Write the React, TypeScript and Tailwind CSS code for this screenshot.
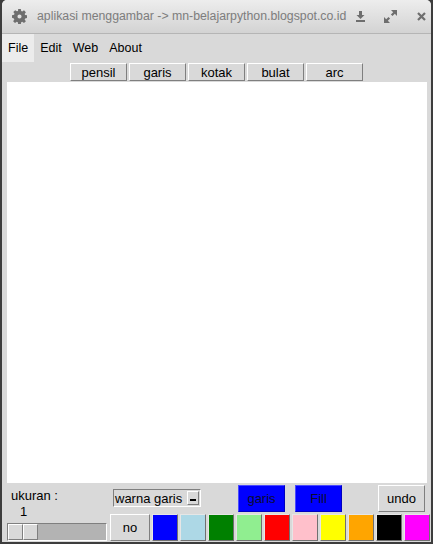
import React from "react";

const SWATCHES = [
  "#0000ff",
  "#add8e6",
  "#008000",
  "#90ee90",
  "#ff0000",
  "#ffc0cb",
  "#ffff00",
  "#ffa500",
  "#000000",
  "#ff00ff",
];

const TOOLS = ["pensil", "garis", "kotak", "bulat", "arc"];

const raised =
  "border border-t-white border-l-white border-b-[#7f7f7f] border-r-[#7f7f7f]";

// chunky 8-tooth gear like the window manager's menu icon
const Gear = () => (
  <svg className="shrink-0" width="15" height="15" viewBox="0 0 16 16" fill="#6e6e6e">
    <path
      fillRule="evenodd"
      d="M6.6 0h2.8l.4 2.2 1.1.5 1.9-1.3 2 2-1.3 1.9.5 1.1 2.2.4v2.8l-2.2.4-.5 1.1 1.3 1.9-2 2-1.9-1.3-1.1.5-.4 2.2H6.6l-.4-2.2-1.1-.5-1.9 1.3-2-2 1.3-1.9-.5-1.1L0 9.4V6.6l2.2-.4.5-1.1-1.3-1.9 2-2 1.9 1.3 1.1-.5zM8 5.8a2.2 2.2 0 1 0 0 4.4 2.2 2.2 0 0 0 0-4.4z"
    />
  </svg>
);

const TitleBar = () => (
  <div className="flex h-[34px] items-center border-b border-[#b5b5b5] bg-gradient-to-b from-[#ededed] to-[#d3d3d3] rounded-t-[5px]">
    <div className="ml-[9px] flex w-[16px] shrink-0 justify-center">
      <Gear />
    </div>
    <span className="ml-[10px] shrink-0 text-[12.3px] text-[#7d7d7d] whitespace-nowrap">
      aplikasi menggambar -&gt; mn-belajarpython.blogspot.co.id
    </span>
    {/* download */}
    <svg className="ml-[10px] shrink-0" width="9" height="11" viewBox="0 0 9 11" fill="#6e6e6e">
      <path d="M3 0h3v4h2.5L4.5 8 0.5 4H3z" />
      <rect x="0" y="9" width="9" height="2" />
    </svg>
    {/* maximize */}
    <svg className="ml-[19px] shrink-0" width="13" height="13" viewBox="0 0 13 13" fill="#6e6e6e">
      <path d="M7 0h6v6l-2.2-2.2-2.3 2.3-1.6-1.6 2.3-2.3z" />
      <path d="M0 7v6h6l-2.2-2.2 2.3-2.3-1.6-1.6-2.3 2.3z" />
    </svg>
    {/* close */}
    <svg className="ml-[20px] shrink-0" width="9" height="9" viewBox="0 0 9 9" stroke="#6e6e6e" strokeWidth="2.2">
      <path d="M1 1l7 7M8 1l-7 7" />
    </svg>
  </div>
);

const MenuBar = () => (
  <div className="flex h-[28px] items-stretch text-[12.5px] text-black">
    <div className="flex items-center bg-[#ececec] px-[6px]">File</div>
    <div className="flex items-center px-[6px]">Edit</div>
    <div className="flex items-center px-[5px]">Web</div>
    <div className="flex items-center px-[6px]">About</div>
  </div>
);

const App = () => {
  return (
    <div
      className="h-[544px] w-[433px] bg-[#3d3d3d] pl-[2px] pr-[2px] pb-[2px]"
      style={{ fontFamily: '"Liberation Sans", Arial, sans-serif' }}
    >
      <div className="flex h-[542px] flex-col rounded-t-[5px] bg-[#d9d9d9]">
        <TitleBar />
        <MenuBar />

        {/* tool buttons */}
        <div className="ml-[68px] mt-[1px] flex h-[19px] gap-[2px]">
          {TOOLS.map((t) => (
            <button
              key={t}
              className={`${raised} flex h-[18px] w-[57px] items-center justify-center bg-[#d9d9d9] text-[13px] leading-none text-black`}
            >
              {t}
            </button>
          ))}
        </div>

        {/* canvas */}
        <div className="ml-[5px] h-[401px] w-[420px] bg-white" />

        {/* bottom controls */}
        <div className="flex flex-1 pl-[5px]">
          <div className="flex w-[100px] flex-col">
            <div className="pl-[4px] pt-[5px] text-[13px] leading-[16px] text-black">ukuran :</div>
            <div className="pl-[13px] text-[13px] leading-[16px] text-black">1</div>
            <div className="mt-[3px] flex h-[18px] w-[100px] border border-t-[#7f7f7f] border-l-[#7f7f7f] border-b-white border-r-white bg-[#b3b3b3]">
              <div className={`${raised} h-full w-[15px] bg-[#d9d9d9]`} />
              <div className={`${raised} h-full w-[15px] bg-[#d9d9d9]`} />
            </div>
          </div>

          <div className="ml-[3px] flex flex-col">
            <div className="flex h-[31px] items-start">
              <div className="ml-[3px] mt-[6px] flex h-[18px] w-[88px] items-center border border-t-[#7f7f7f] border-l-[#7f7f7f] border-b-white border-r-white pl-[1px]">
                <span className="flex-1 text-[13px] leading-none text-black">warna garis</span>
                <div className={`${raised} mr-[1px] flex h-[14px] w-[12px] items-end justify-center bg-[#d9d9d9] pb-[3px]`}>
                  <div className="h-[2px] w-[6px] bg-black" />
                </div>
              </div>
              <button className="ml-[37px] mt-[2px] flex h-[27px] w-[47px] items-center justify-center border border-[#4a4aff] border-b-[#0000c0] border-r-[#0000c0] bg-[#0000ff] text-[13px] text-[#0c0c2e]">
                garis
              </button>
              <button className="ml-[10px] mt-[2px] flex h-[27px] w-[47px] items-center justify-center border border-[#4a4aff] border-b-[#0000c0] border-r-[#0000c0] bg-[#0000ff] text-[13px] text-[#0c0c2e]">
                Fill
              </button>
              <button className={`${raised} ml-[36px] mt-[2px] flex h-[27px] w-[47px] items-center justify-center bg-[#d9d9d9] text-[13px] text-black`}>
                undo
              </button>
            </div>
            <div className="flex gap-[2px]">
              <button className={`${raised} flex h-[27px] w-[40px] items-center justify-center bg-[#d9d9d9] text-[13px] text-black`}>
                no
              </button>
              {SWATCHES.map((c) => (
                <div
                  key={c}
                  className="h-[27px] w-[26px] border border-t-[#e6e6e6] border-l-[#e6e6e6] border-b-[#707070] border-r-[#707070]"
                  style={{ backgroundColor: c }}
                />
              ))}
            </div>
          </div>
        </div>
      </div>
    </div>
  );
};

export default App;
